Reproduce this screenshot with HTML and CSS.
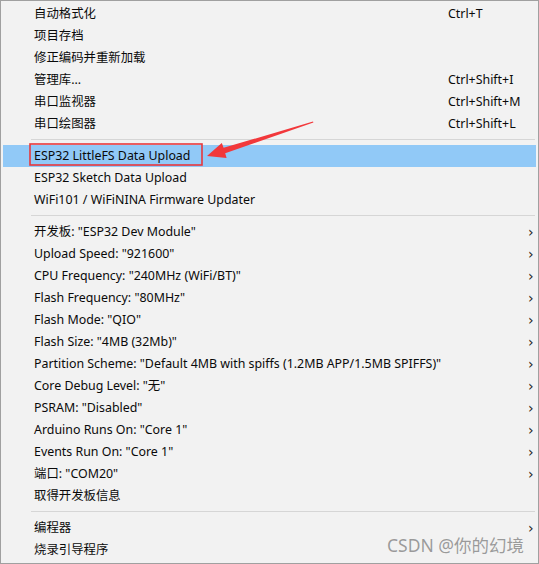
FILE: index.html
```html
<!DOCTYPE html>
<html lang="zh">
<head>
<meta charset="utf-8">
<title>Menu</title>
<link rel="stylesheet" href="styles.css">
</head>
<body>
<div class="menu">
  <div class="row"><span class="label">自动格式化</span><span class="key">Ctrl+T</span><span class="chev"></span></div>
  <div class="row"><span class="label">项目存档</span><span class="key"></span><span class="chev"></span></div>
  <div class="row"><span class="label">修正编码并重新加载</span><span class="key"></span><span class="chev"></span></div>
  <div class="row"><span class="label">管理库...</span><span class="key">Ctrl+Shift+I</span><span class="chev"></span></div>
  <div class="row"><span class="label">串口监视器</span><span class="key">Ctrl+Shift+M</span><span class="chev"></span></div>
  <div class="row"><span class="label">串口绘图器</span><span class="key">Ctrl+Shift+L</span><span class="chev"></span></div>
  <div class="sep"></div>
  <div class="row active"><span class="label">ESP32 LittleFS Data Upload</span><span class="key"></span><span class="chev"></span></div>
  <div class="row"><span class="label">ESP32 Sketch Data Upload</span><span class="key"></span><span class="chev"></span></div>
  <div class="row"><span class="label">WiFi101 / WiFiNINA Firmware Updater</span><span class="key"></span><span class="chev"></span></div>
  <div class="sep"></div>
  <div class="row"><span class="label">开发板: "ESP32 Dev Module"</span><span class="key"></span><span class="chev">›</span></div>
  <div class="row"><span class="label">Upload Speed: "921600"</span><span class="key"></span><span class="chev">›</span></div>
  <div class="row"><span class="label">CPU Frequency: "240MHz (WiFi/BT)"</span><span class="key"></span><span class="chev">›</span></div>
  <div class="row"><span class="label">Flash Frequency: "80MHz"</span><span class="key"></span><span class="chev">›</span></div>
  <div class="row"><span class="label">Flash Mode: "QIO"</span><span class="key"></span><span class="chev">›</span></div>
  <div class="row"><span class="label">Flash Size: "4MB (32Mb)"</span><span class="key"></span><span class="chev">›</span></div>
  <div class="row"><span class="label">Partition Scheme: "Default 4MB with spiffs (1.2MB APP/1.5MB SPIFFS)"</span><span class="key"></span><span class="chev">›</span></div>
  <div class="row"><span class="label">Core Debug Level: "无"</span><span class="key"></span><span class="chev">›</span></div>
  <div class="row"><span class="label">PSRAM: "Disabled"</span><span class="key"></span><span class="chev">›</span></div>
  <div class="row"><span class="label">Arduino Runs On: "Core 1"</span><span class="key"></span><span class="chev">›</span></div>
  <div class="row"><span class="label">Events Run On: "Core 1"</span><span class="key"></span><span class="chev">›</span></div>
  <div class="row"><span class="label">端口: "COM20"</span><span class="key"></span><span class="chev">›</span></div>
  <div class="row"><span class="label">取得开发板信息</span><span class="key"></span><span class="chev"></span></div>
  <div class="sep"></div>
  <div class="row"><span class="label">编程器</span><span class="key"></span><span class="chev">›</span></div>
  <div class="row"><span class="label">烧录引导程序</span><span class="key"></span><span class="chev"></span></div>

  <svg class="annot" width="539" height="564" viewBox="0 0 539 564" aria-hidden="true">
    <rect x="30" y="144" width="172" height="21" fill="none" stroke="#e8383b" stroke-width="1.6"/>
    <polygon points="207,156 221.8,142.9 223.6,147.8 313,121.6 313.4,122.6 225.2,153.2 226.6,158.1" fill="#f2383b"/>
  </svg>
  <div class="watermark">CSDN @你的幻境</div>
</div>
</body>
</html>
```

FILE: styles.css
```css
html, body {
  margin: 0;
  padding: 0;
  background: #f2f2f2;
}

.menu {
  position: relative;
  box-sizing: border-box;
  width: 539px;
  height: 564px;
  border: 1px solid #a0a0a0;
  background: #f2f2f2;
  padding: 2px 2px 0 2px;
  font-family: "Noto Sans", "Noto Sans CJK SC", sans-serif;
  font-size: 12.4px;
  color: #0a0a0a;
  overflow: hidden;
}

.row {
  display: grid;
  grid-template-columns: 1fr 66px 22px;
  align-items: center;
  height: 22px;
  padding-left: 31px;
  white-space: nowrap;
}

.row.active {
  background: #91c9f7;
}

.label {
  line-height: 22px;
}

.key {
  line-height: 22px;
}

.chev {
  padding-left: 14px;
  font-family: "DejaVu Sans", sans-serif;
  font-size: 14px;
  line-height: 22px;
  color: #222;
}

.sep {
  height: 4px;
  margin: 0 1px 5px 28px;
  border-bottom: 1px solid #d6d6d6;
}

.annot {
  position: absolute;
  left: -1px;
  top: -1px;
  pointer-events: none;
}

.watermark {
  position: absolute;
  right: 14px;
  bottom: 6px;
  font-family: "Noto Sans", "Noto Sans CJK SC", sans-serif;
  font-size: 17.5px;
  color: rgba(120, 120, 120, 0.72);
}
```
